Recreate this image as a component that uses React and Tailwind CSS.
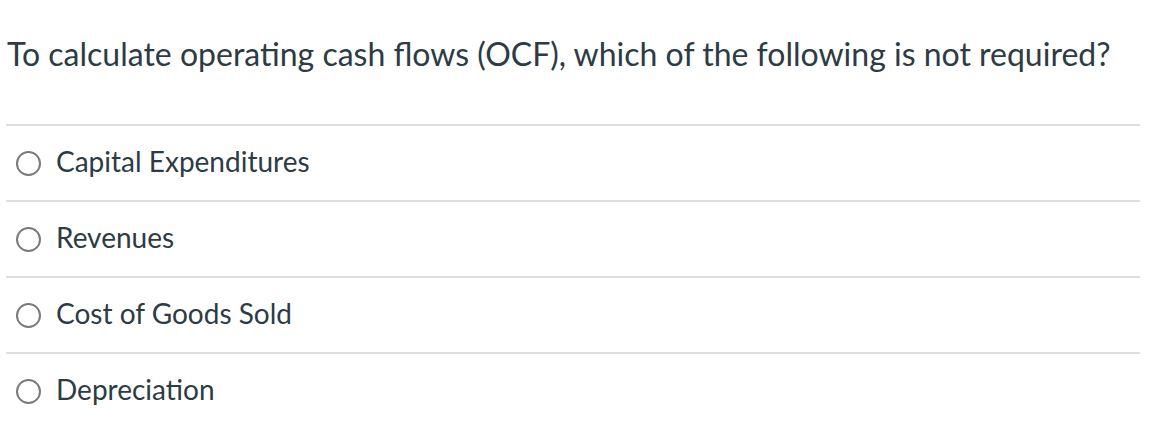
import React from "react";

const options = ["Capital Expenditures", "Revenues", "Cost of Goods Sold", "Depreciation"];

export default function App() {
  return (
    <div className="w-[1156px] h-[440px] bg-white text-[#2d3b45]" style={{ fontFamily: "Lato, 'Noto Sans', sans-serif" }}>
      <div className="pl-[7px] pt-[35px] pb-[51px] text-[32px] leading-[38px]">
        To calculate operating cash flows (OCF), which of the following is not required?
      </div>
      <div className="ml-[6px] w-[1134px]">
        {options.map((o) => (
          <div key={o} className="border-t-2 border-[#dedede] h-[76px] flex items-center gap-[15px] pl-[10px]">
            <span className="w-[25px] h-[25px] rounded-full border-2 border-[#7a7a7a] shrink-0" />
            <span className="text-[28px] leading-[32px] mb-[4px]">{o}</span>
          </div>
        ))}
      </div>
    </div>
  );
}
